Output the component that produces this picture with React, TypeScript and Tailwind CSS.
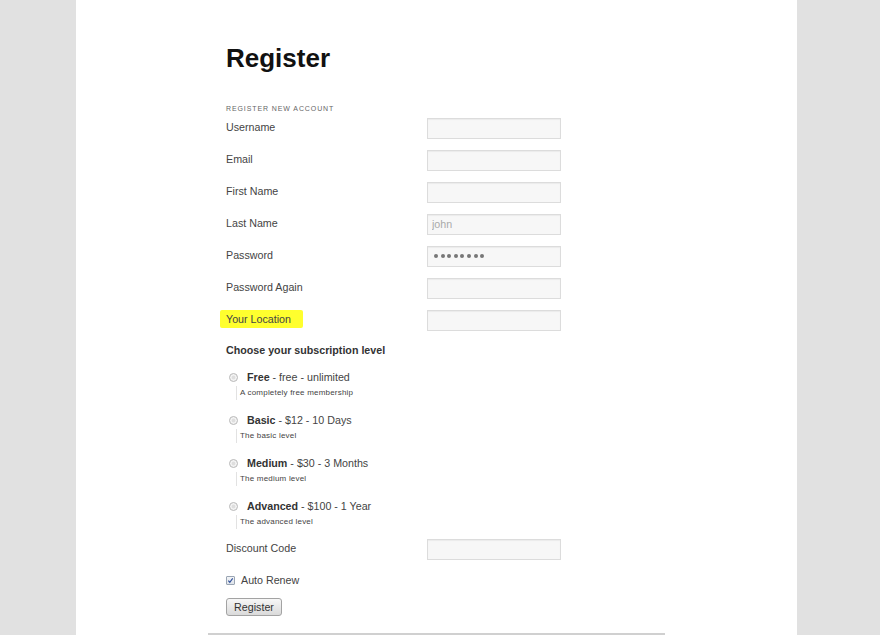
import React from 'react';

const fields = [
  { label: 'Username' },
  { label: 'Email' },
  { label: 'First Name' },
  { label: 'Last Name', placeholder: 'john' },
  { label: 'Password', password: true },
  { label: 'Password Again' },
  { label: 'Your Location', highlight: true },
];

const levels = [
  { name: 'Free', price: 'free - unlimited', desc: 'A completely free membership' },
  { name: 'Basic', price: '$12 - 10 Days', desc: 'The basic level' },
  { name: 'Medium', price: '$30 - 3 Months', desc: 'The medium level' },
  { name: 'Advanced', price: '$100 - 1 Year', desc: 'The advanced level' },
];

const TextBox: React.FC<{ placeholder?: string; password?: boolean }> = ({ placeholder, password }) => {
  if (password) {
    return (
      <div className="w-[134px] h-[21px] border border-[#dcdcdc] bg-[#f7f7f7] shadow-[inset_0_1px_1px_rgba(0,0,0,0.05)] flex items-center pl-[6px] gap-[2.6px]">
        {Array.from({ length: 8 }).map((_, i) => (
          <span key={i} className="w-[4px] h-[4px] rounded-full bg-[#777]"></span>
        ))}
      </div>
    );
  }
  return (
    <input
      readOnly
      placeholder={placeholder}
      className="w-[134px] h-[21px] border border-[#dcdcdc] bg-[#f7f7f7] shadow-[inset_0_1px_1px_rgba(0,0,0,0.05)] px-[4px] text-[10.7px] text-[#444] placeholder:text-[#aaa] outline-none font-['Liberation_Sans',Arial,sans-serif]"
    />
  );
};

const Row: React.FC<{ label: string; highlight?: boolean; placeholder?: string; password?: boolean }> = ({ label, highlight, placeholder, password }) => (
  <div className="h-[32px] grid grid-cols-[201px_134px] items-center">
    <span className="text-[10.7px] text-[#444] -mt-[2px]">
      {highlight ? (
        <span className="bg-[#ffff2e] -ml-[6px] pl-[6px] pr-[12px] py-[3px] rounded-[2px]">{label}</span>
      ) : (
        label
      )}
    </span>
    <TextBox placeholder={placeholder} password={password} />
  </div>
);

const Radio = () => (
  <span className="w-[9px] h-[9px] rounded-full border border-[#bdbdbd] bg-[#dedede] shadow-[inset_0_0_0_1.5px_#f4f4f4] ml-[3px] shrink-0"></span>
);

export default function App() {
  return (
    <div className="h-[635px] bg-[#e1e1e1] font-['Liberation_Sans',Arial,sans-serif] overflow-hidden">
      <div className="ml-[76px] w-[721px] h-full bg-white">
        <div className="ml-[150px] pt-[43px]">
          <h1 className="text-[26px] leading-[30px] font-bold text-[#111]">Register</h1>
          <div className="mt-[32px] text-[7px] leading-[7px] tracking-[0.9px] text-[#666] uppercase">Register new account</div>
          {fields.map((f) => (
            <Row key={f.label} {...f} />
          ))}
          <div className="h-[28px] flex items-center text-[10.7px] font-bold text-[#333]">Choose your subscription level</div>
          <div className="mt-[5px] flex flex-col gap-[12px]">
            {levels.map((l) => (
              <div key={l.name} className="flex flex-col gap-[1px]">
                <div className="h-[16px] flex items-center gap-[9px] text-[10.7px] text-[#444]">
                  <Radio />
                  <span>
                    <b className="text-[#333]">{l.name}</b> - {l.price}
                  </span>
                </div>
                <div className="ml-[10px] h-[14px] border-l border-[#e2e2e2] pl-[3px] text-[8px] leading-[14px] tracking-[0.2px] text-[#444]">
                  {l.desc}
                </div>
              </div>
            ))}
          </div>
          <div className="mt-[4px]">
            <Row label="Discount Code" />
          </div>
          <label className="mt-[7px] h-[16px] flex items-center gap-[6px] text-[10.7px] text-[#444]">
            <span className="w-[9px] h-[9px] border border-[#9aa5b3] bg-gradient-to-b from-[#f2f4f7] to-[#dfe4ea] rounded-[1px] flex items-center justify-center">
              <svg viewBox="0 0 8 8" className="w-[7px] h-[7px]">
                <path d="M1.5 4.2 L3.2 6 L6.5 1.6" fill="none" stroke="#2f4f9a" strokeWidth="1.3" />
              </svg>
            </span>
            Auto Renew
          </label>
          <button className="block mt-[10px] h-[18px] w-[56px] border border-[#a3a3a3] rounded-[3px] bg-gradient-to-b from-[#f7f7f7] to-[#dadada] text-[10.7px] text-[#333] leading-none">
            Register
          </button>
        </div>
        <div className="mt-[17px] ml-[132px] w-[457px] h-[2px] bg-[#d0d0d0]"></div>
      </div>
    </div>
  );
}
